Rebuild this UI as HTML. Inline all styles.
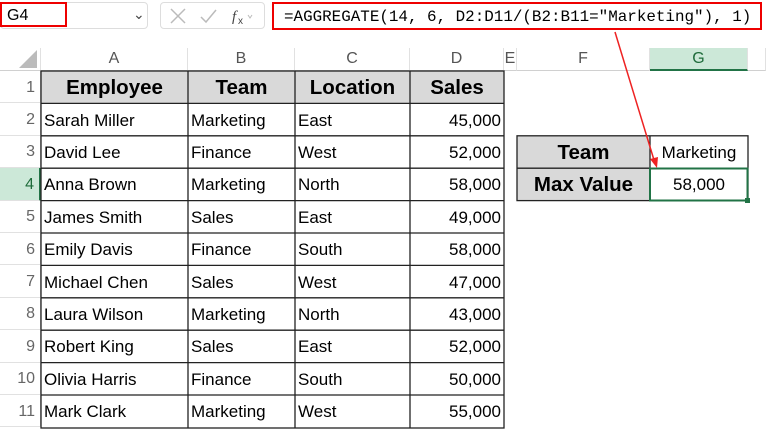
<!DOCTYPE html>
<html><head><style>
*{margin:0;padding:0;box-sizing:border-box}
body{width:766px;height:429px;overflow:hidden;background:#fff;font-family:"Liberation Sans",Arial,sans-serif;position:relative}
.a{position:absolute}
.sheet{position:absolute;left:0;top:48px;display:grid;grid-template-columns:41px 147px 107px 115px 94px 13px 133px 98px 18px;grid-template-rows:23px repeat(11,32.4px)}
.sheet div{font-size:17px;color:#000;white-space:nowrap;overflow:hidden;display:flex;align-items:center;padding:2px 3px 0}
.sheet .ch{background:#fff;color:#555;font-size:16px;justify-content:center;border-right:1px solid #e1e1e1;border-bottom:1px solid #d0d0d0;padding:0}
.sheet .rh{color:#666;font-size:16px;justify-content:flex-end;padding-right:5px;background:#fff;border-right:1px solid #d0d0d0;border-bottom:1px solid #e1e1e1}
.r{justify-content:flex-end}
.h{background:#d9d9d9;font-weight:bold;font-size:20.5px!important;justify-content:center}
</style></head><body>
<div class="a" style="left:0;top:2px;width:148px;height:27px;border:1px solid #ddd;border-radius:4px"></div>
<div class="a" style="left:0;top:2px;width:67px;height:25px;border:2px solid #e00;font-size:16px;padding:3px 0 0 5px">G4</div>
<div class="a" style="left:133px;top:6px;font-size:14px;color:#444">&#8964;</div>
<div class="a" style="left:160px;top:2px;width:105px;height:27px;border:1px solid #ddd;border-radius:4px"></div>
<svg class="a" style="left:168px;top:7px" width="90" height="18"><path d="M3 2l14 14M17 2L3 16" stroke="#bbb" stroke-width="1.5" fill="none"/><path d="M33 10l5 5 10-12" stroke="#bbb" stroke-width="1.5" fill="none"/><text x="64" y="14" font-size="15" font-style="italic" fill="#444" font-family="Liberation Serif">f</text><text x="70" y="17" font-size="10" fill="#444">x</text><path d="M80 8l2 3 2-3" stroke="#bbb" fill="none"/></svg>
<div class="a" style="left:272px;top:2px;width:490px;height:28px;border:2px solid #e00;font-family:'Liberation Mono',monospace;font-size:15.9px;padding:4px 0 0 10px;white-space:nowrap">=AGGREGATE(14, 6, D2:D11/(B2:B11="Marketing"), 1)</div>
<div class="a" style="left:0;top:70px;width:766px;height:1px;background:#d0d0d0"></div>
<div class="sheet">
<div class="ch" style="position:relative"><svg width="18" height="18" style="position:absolute;right:3px;bottom:2px"><path d="M18 0V18H0Z" fill="#bbb"/></svg></div><div class="ch">A</div><div class="ch">B</div><div class="ch">C</div><div class="ch">D</div><div class="ch">E</div><div class="ch">F</div><div class="ch" style="background:#cce8d8;color:#1e6b3a;border-bottom:2px solid #217346">G</div><div class="ch"></div>

<div class="rh">1</div><div class="h">Employee</div><div class="h">Team</div><div class="h">Location</div><div class="h">Sales</div><div></div><div></div><div></div><div></div>

<div class="rh">2</div><div>Sarah Miller</div><div>Marketing</div><div>East</div><div class="r">45,000</div><div></div><div></div><div></div><div></div>
<div class="rh">3</div><div>David Lee</div><div>Finance</div><div>West</div><div class="r">52,000</div><div></div><div class="h">Team</div><div style="justify-content:center">Marketing</div><div></div>
<div class="rh" style="background:#cce8d8;color:#1e6b3a;border-right:2px solid #217346">4</div><div>Anna Brown</div><div>Marketing</div><div>North</div><div class="r">58,000</div><div></div><div class="h">Max Value</div><div style="justify-content:center">58,000</div><div></div>
<div class="rh">5</div><div>James Smith</div><div>Sales</div><div>East</div><div class="r">49,000</div><div></div><div></div><div></div><div></div>
<div class="rh">6</div><div>Emily Davis</div><div>Finance</div><div>South</div><div class="r">58,000</div><div></div><div></div><div></div><div></div>
<div class="rh">7</div><div>Michael Chen</div><div>Sales</div><div>West</div><div class="r">47,000</div><div></div><div></div><div></div><div></div>
<div class="rh">8</div><div>Laura Wilson</div><div>Marketing</div><div>North</div><div class="r">43,000</div><div></div><div></div><div></div><div></div>
<div class="rh">9</div><div>Robert King</div><div>Sales</div><div>East</div><div class="r">52,000</div><div></div><div></div><div></div><div></div>
<div class="rh">10</div><div>Olivia Harris</div><div>Finance</div><div>South</div><div class="r">50,000</div><div></div><div></div><div></div><div></div>
<div class="rh">11</div><div>Mark Clark</div><div>Marketing</div><div>West</div><div class="r">55,000</div><div></div><div></div><div></div><div></div>
</div>
<svg class="a" style="left:0;top:0" width="766" height="429">
<g stroke="#222" stroke-width="1.3" fill="none">
<rect x="41" y="71" width="463" height="357"/>
<path d="M188 71V428M295 71V428M410 71V428"/>
<path d="M41 103.4H504M41 135.8H504M41 168.2H504M41 200.6H504M41 233H504M41 265.4H504M41 297.8H504M41 330.2H504M41 362.6H504M41 395H504"/>
<rect x="517" y="135.8" width="231" height="64.8"/>
<path d="M517 168.2H748M650 135.8V200.6"/>
</g>
<rect x="650" y="168.5" width="97.5" height="32" stroke="#217346" stroke-width="2" fill="none"/>
<rect x="745" y="198" width="5" height="5" fill="#217346"/>
<line x1="615" y1="32" x2="654" y2="160" stroke="#e22" stroke-width="1.5"/>
<path d="M657 168l-7-9 8-2z" fill="#e22"/>
</svg>
</body></html>
